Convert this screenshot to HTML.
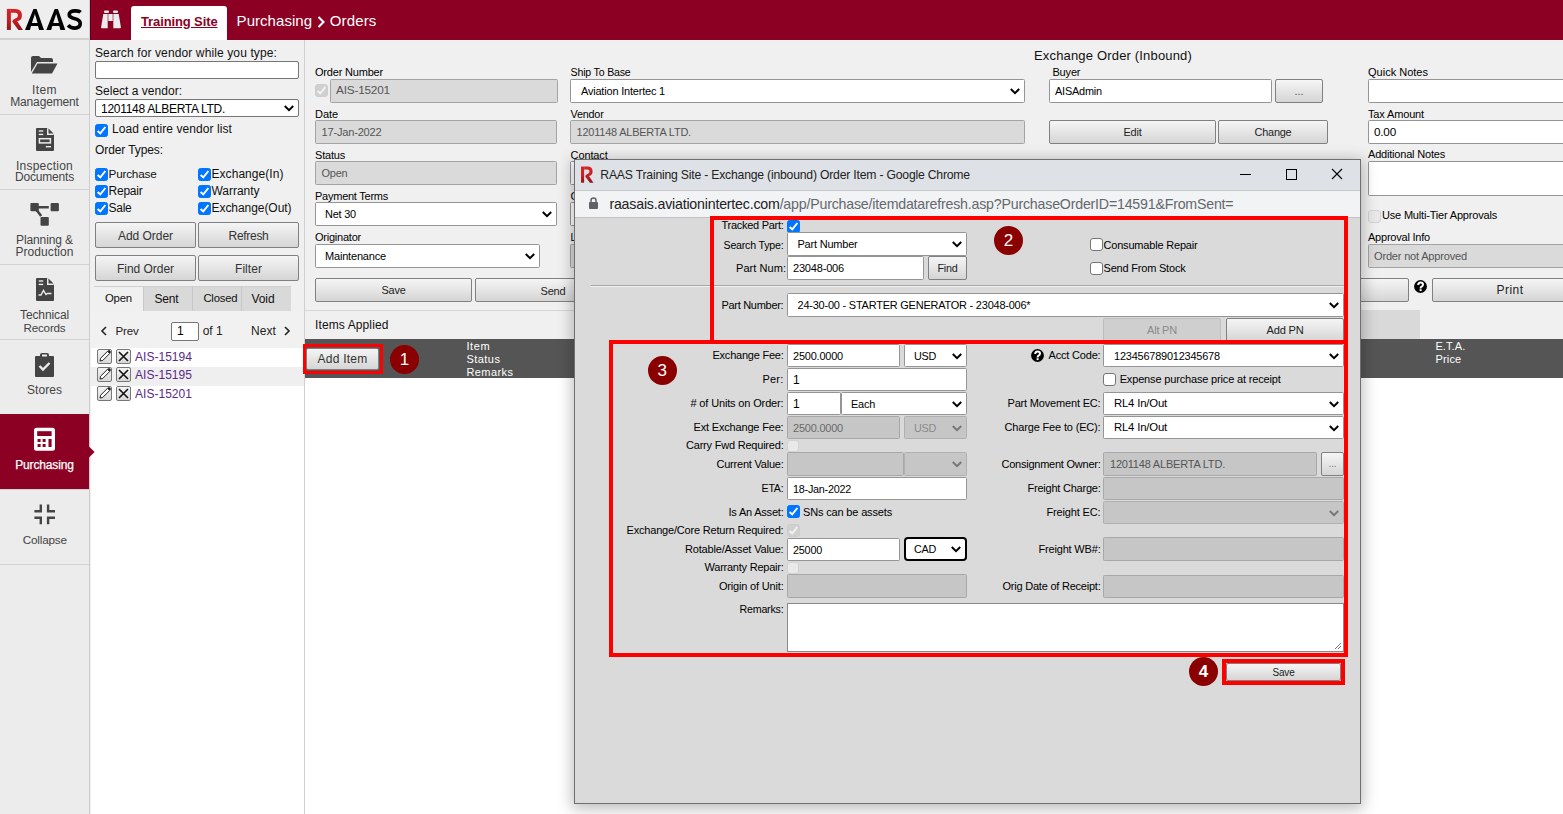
<!DOCTYPE html>
<html><head><meta charset="utf-8"><style>html,body{margin:0;padding:0;width:1563px;height:814px;overflow:hidden;background:#f0f0f0;font-family:"Liberation Sans",sans-serif;}
span{white-space:pre;}
</style></head>
<body>
<div style="position:absolute;left:0px;top:0px;width:90px;height:40px;box-sizing:border-box;background:#eeeeee;border-bottom:2px solid #d0d0d0;border-right:1px solid #d0d0d0;"></div>
<svg style="position:absolute;left:0;top:0" width="90" height="40" viewBox="0 0 90 40"><defs><linearGradient id="rg" x1="0" y1="0" x2="0" y2="1"><stop offset="0" stop-color="#d92327"/><stop offset="0.55" stop-color="#c51f24"/><stop offset="1" stop-color="#8a1719"/></linearGradient></defs><path d="M6.9,8.9 H10.9 V29.9 H6.9 Z" fill="url(#rg)"/><path d="M10.9,8.9 H15.5 Q21.9,8.9 21.9,15.4 Q21.9,20.3 17.2,21.2 L23,29.9 H18.4 L12.1,21.4 Q13.3,19.2 15.3,18.6 Q17.9,17.7 17.9,15.4 Q17.9,12.7 15.3,12.7 H10.9 Z" fill="url(#rg)"/><path fill-rule="evenodd" fill="#000" d="M25,29.9 L33.4,8.9 H36.6 L44,29.9 H39.1 L38,26 H31 L29.9,29.9 Z M31.9,23 L34.9,14 L37.6,23 Z"/><path fill-rule="evenodd" fill="#000" d="M46.3,29.9 L54.7,8.9 H57.9 L65.3,29.9 H60.4 L59.3,26 H52.3 L51.2,29.9 Z M53.2,23 L56.2,14 L58.9,23 Z"/><path d="M80.6,12.2 C78.9,10.5 77,10.8 74.8,10.8 C71.6,10.8 69.2,12.2 69.2,14.6 C69.2,17.4 72,18.2 75,18.8 C78.4,19.5 80.2,20.7 80.2,23.8 C80.2,26.9 77.6,28.1 74.6,28.1 C72,28.1 70,27.3 68.1,25.3" fill="none" stroke="#000" stroke-width="3.7"/></svg>
<div style="position:absolute;left:90px;top:0px;width:1473px;height:40px;box-sizing:border-box;background:#8c0023;"></div>
<div style="position:absolute;left:90px;top:0px;width:1px;height:40px;box-sizing:border-box;background:#5e0017;"></div>
<svg style="position:absolute;left:100px;top:10px" width="22" height="19" viewBox="0 0 22 19"><rect x="4" y="0.6" width="5" height="2.5" rx="1" fill="#ebebeb"/><rect x="13" y="0.6" width="5" height="2.5" rx="1" fill="#ebebeb"/><path d="M3.3 4 H7.7 V18.2 H2 Q1 18.2 1.1 17.2 Z" fill="#ebebeb"/><path d="M13.3 4 H18.7 L20.9 17.2 Q21 18.2 20 18.2 H13.3 Z" fill="#ebebeb"/><rect x="8.3" y="4" width="4.4" height="7" fill="#ebebeb"/></svg>
<div style="position:absolute;left:131px;top:6px;width:96px;height:34px;box-sizing:border-box;background:#fff;border-radius:3px 3px 0 0;"></div>
<span style="position:absolute;left:141.00px;top:15.20px;font-size:13px;line-height:13px;color:#8c0023;font-weight:700;letter-spacing:-0.117px;text-decoration:underline;">Training Site</span>
<span style="position:absolute;left:236.60px;top:13.30px;font-size:15px;line-height:15px;color:#fff;font-weight:400;letter-spacing:0.045px;">Purchasing</span>
<span style="position:absolute;left:329.80px;top:13.30px;font-size:15px;line-height:15px;color:#fff;font-weight:400;letter-spacing:0.126px;">Orders</span>
<svg style="position:absolute;left:317px;top:16px" width="9" height="12" viewBox="0 0 9 12"><path d="M1.5 1 L6.5 6 L1.5 11" fill="none" stroke="#fff" stroke-width="2.1"/></svg>
<div style="position:absolute;left:0px;top:40px;width:90px;height:774px;box-sizing:border-box;background:#ececec;border-right:1px solid #cdcdcd;"></div>
<div style="position:absolute;left:0px;top:114px;width:89px;height:1px;box-sizing:border-box;background:#d2d2d2;"></div>
<div style="position:absolute;left:0px;top:189px;width:89px;height:1px;box-sizing:border-box;background:#d2d2d2;"></div>
<div style="position:absolute;left:0px;top:264px;width:89px;height:1px;box-sizing:border-box;background:#d2d2d2;"></div>
<div style="position:absolute;left:0px;top:339px;width:89px;height:1px;box-sizing:border-box;background:#d2d2d2;"></div>
<div style="position:absolute;left:0px;top:414px;width:89px;height:1px;box-sizing:border-box;background:#d2d2d2;"></div>
<div style="position:absolute;left:0px;top:489px;width:89px;height:1px;box-sizing:border-box;background:#d2d2d2;"></div>
<div style="position:absolute;left:0px;top:564px;width:89px;height:1px;box-sizing:border-box;background:#d2d2d2;"></div>
<svg style="position:absolute;left:31px;top:56px" width="27" height="18" viewBox="0 0 27 18"><path d="M0 2 Q0 0 2 0 H8 L10 2 H20 Q22 2 22 4 V6 H6 L0 16 Z" fill="#444"/><path d="M6.5 7.5 H26.5 L21 17.5 H0.8 Z" fill="#444"/></svg>
<span style="position:absolute;left:32.00px;top:84.14px;font-size:12px;line-height:12px;color:#444;font-weight:400;letter-spacing:0.414px;">Item</span>
<span style="position:absolute;left:10.20px;top:96.44px;font-size:12px;line-height:12px;color:#444;font-weight:400;letter-spacing:-0.145px;">Management</span>
<svg style="position:absolute;left:36px;top:128px" width="18" height="23" viewBox="0 0 18 23"><path d="M0 1 Q0 0 1 0 H11 L18 7 V22 Q18 23 17 23 H1 Q0 23 0 22 Z" fill="#444"/><path d="M11 0 V7 H18" fill="#ececec"/><path d="M12.5 0.5 L17.5 5.5 H12.5 Z" fill="#444"/><rect x="2.7" y="2.3" width="4.5" height="1.4" fill="#ececec"/><rect x="2.7" y="5.7" width="4.5" height="1.4" fill="#ececec"/><rect x="3.4" y="10.7" width="11" height="4.2" fill="none" stroke="#ececec" stroke-width="1.5"/><rect x="9.8" y="18" width="5.2" height="1.4" fill="#ececec"/></svg>
<span style="position:absolute;left:16.00px;top:159.94px;font-size:12px;line-height:12px;color:#444;font-weight:400;letter-spacing:0.230px;">Inspection</span>
<span style="position:absolute;left:15.00px;top:171.44px;font-size:12px;line-height:12px;color:#444;font-weight:400;letter-spacing:-0.189px;">Documents</span>
<svg style="position:absolute;left:30px;top:203px" width="30" height="23" viewBox="0 0 30 23"><rect x="0.4" y="0.1" width="8.4" height="8.1" rx="1" fill="#444"/><rect x="20.6" y="0.1" width="8.3" height="8.1" rx="1" fill="#444"/><rect x="10.5" y="14.1" width="8.3" height="8.6" rx="1" fill="#444"/><rect x="8" y="3" width="10.8" height="2.5" fill="#444"/><path d="M6.6 7 L11.2 13" stroke="#444" stroke-width="2.6"/></svg>
<span style="position:absolute;left:16.00px;top:234.44px;font-size:12px;line-height:12px;color:#444;font-weight:400;letter-spacing:-0.105px;">Planning &amp;</span>
<span style="position:absolute;left:15.50px;top:246.44px;font-size:12px;line-height:12px;color:#444;font-weight:400;letter-spacing:0.062px;">Production</span>
<svg style="position:absolute;left:36px;top:278px" width="18" height="23" viewBox="0 0 18 23"><path d="M0 1 Q0 0 1 0 H11 L18 7 V22 Q18 23 17 23 H1 Q0 23 0 22 Z" fill="#444"/><path d="M11 0 V7 H18" fill="#ececec"/><path d="M12.5 0.5 L17.5 5.5 H12.5 Z" fill="#444"/><rect x="2.7" y="2.3" width="4.5" height="1.4" fill="#ececec"/><rect x="2.7" y="5.7" width="4.5" height="1.4" fill="#ececec"/><path d="M2.5 17 H5 L7.5 12.5 L10 16.5 L11.5 15.5 H15.5" fill="none" stroke="#ececec" stroke-width="1.4"/></svg>
<span style="position:absolute;left:20.00px;top:309.44px;font-size:12px;line-height:12px;color:#444;font-weight:400;letter-spacing:-0.115px;">Technical</span>
<span style="position:absolute;left:23.50px;top:321.74px;font-size:11.65px;line-height:11.65px;color:#444;font-weight:400;letter-spacing:-0.198px;">Records</span>
<svg style="position:absolute;left:35px;top:353px" width="19" height="24" viewBox="0 0 19 24"><path d="M0 4 Q0 3 1 3 H5 V2 Q5 0 7 0 H12 Q14 0 14 2 V3 H18 Q19 3 19 4 V23 Q19 24 18 24 H1 Q0 24 0 23 Z" fill="#444"/><rect x="7" y="1.5" width="5" height="2" fill="#ececec"/><path d="M4.5 13 L8 16.5 L14.5 10" fill="none" stroke="#ececec" stroke-width="2.4"/></svg>
<span style="position:absolute;left:27.00px;top:384.44px;font-size:12px;line-height:12px;color:#444;font-weight:400;letter-spacing:0.052px;">Stores</span>
<div style="position:absolute;left:0px;top:414px;width:89px;height:75px;box-sizing:border-box;background:#8c0023;"></div>
<svg style="position:absolute;left:89px;top:446px;z-index:5" width="6" height="12" viewBox="0 0 6 12"><path d="M0 0.4 L5.6 6 L0 11.6 Z" fill="#8c0023"/></svg>
<svg style="position:absolute;left:34px;top:427px" width="22" height="24" viewBox="0 0 22 24"><rect x="0" y="0.7" width="21" height="23" rx="2.5" fill="#fff"/><rect x="3.2" y="4.2" width="14.4" height="4.8" fill="#8c0023"/><rect x="3.6" y="12" width="3" height="3" fill="#8c0023"/><rect x="8.6" y="12" width="3" height="3" fill="#8c0023"/><rect x="3.6" y="17" width="3" height="3" fill="#8c0023"/><rect x="8.6" y="17" width="3" height="3" fill="#8c0023"/><rect x="14.5" y="12" width="3.1" height="8" fill="#8c0023"/></svg>
<span style="position:absolute;left:15.25px;top:459.14px;font-size:12px;line-height:12px;color:#fff;font-weight:400;letter-spacing:-0.155px;-webkit-text-stroke:0.25px #fff;">Purchasing</span>
<svg style="position:absolute;left:34px;top:504px" width="22" height="21" viewBox="0 0 22 21"><path d="M0.4 7.3 H6.8 V0.6 M21 7.3 H14.1 V0.6 M0.4 13.8 H6.8 V20.3 M21 13.8 H14.1 V20.3" fill="none" stroke="#444" stroke-width="2.4"/></svg>
<span style="position:absolute;left:22.75px;top:534.48px;font-size:11.72px;line-height:11.72px;color:#444;font-weight:400;letter-spacing:-0.202px;">Collapse</span>
<div style="position:absolute;left:90px;top:40px;width:215px;height:774px;box-sizing:border-box;background:#f0f0f0;border-right:1px solid #d0d0d0;"></div>
<span style="position:absolute;left:95.00px;top:47.44px;font-size:12px;line-height:12px;color:#111;font-weight:400;letter-spacing:0.118px;">Search for vendor while you type:</span>
<div style="position:absolute;left:95px;top:61px;width:204px;height:18px;box-sizing:border-box;background:#fff;border:1px solid #767676;border-radius:2px;"></div>
<span style="position:absolute;left:95.00px;top:85.44px;font-size:12px;line-height:12px;color:#111;font-weight:400;letter-spacing:0.018px;">Select a vendor:</span>
<div style="position:absolute;left:95px;top:99px;width:204px;height:18px;box-sizing:border-box;background:#fff;border:1px solid #767676;border-radius:2px;"><svg width="10" height="7" viewBox="0 0 10 7" style="position:absolute;right:4.5px;top:50%;margin-top:-3px"><path d="M0.8 1 L5 5.2 L9.2 1" fill="none" stroke="#000" stroke-width="2"/></svg></div>
<span style="position:absolute;left:101.00px;top:103.14px;font-size:12px;line-height:12px;color:#000;font-weight:400;letter-spacing:-0.294px;">1201148 ALBERTA LTD.</span>
<div style="position:absolute;left:95px;top:124px;width:13px;height:13px;box-sizing:border-box;background:#0075ff;border-radius:2.5px;border:1px solid #0075ff;"><svg width="13" height="13" viewBox="0 0 13 13" style="position:absolute;left:-1px;top:-1px"><path d="M2.6 6.9 L5.3 9.4 L10.4 3.0" fill="none" stroke="#fff" stroke-width="2"/></svg></div>
<span style="position:absolute;left:112.00px;top:123.44px;font-size:12px;line-height:12px;color:#111;font-weight:400;letter-spacing:0.084px;">Load entire vendor list</span>
<span style="position:absolute;left:95.00px;top:144.44px;font-size:12px;line-height:12px;color:#111;font-weight:400;letter-spacing:-0.095px;">Order Types:</span>
<div style="position:absolute;left:95px;top:168px;width:13px;height:13px;box-sizing:border-box;background:#0075ff;border-radius:2.5px;border:1px solid #0075ff;"><svg width="13" height="13" viewBox="0 0 13 13" style="position:absolute;left:-1px;top:-1px"><path d="M2.6 6.9 L5.3 9.4 L10.4 3.0" fill="none" stroke="#fff" stroke-width="2"/></svg></div>
<div style="position:absolute;left:198px;top:168px;width:13px;height:13px;box-sizing:border-box;background:#0075ff;border-radius:2.5px;border:1px solid #0075ff;"><svg width="13" height="13" viewBox="0 0 13 13" style="position:absolute;left:-1px;top:-1px"><path d="M2.6 6.9 L5.3 9.4 L10.4 3.0" fill="none" stroke="#fff" stroke-width="2"/></svg></div>
<span style="position:absolute;left:108.50px;top:167.86px;font-size:11.74px;line-height:11.74px;color:#111;font-weight:400;letter-spacing:-0.201px;">Purchase</span>
<span style="position:absolute;left:211.50px;top:167.64px;font-size:12px;line-height:12px;color:#111;font-weight:400;letter-spacing:0.052px;">Exchange(In)</span>
<div style="position:absolute;left:95px;top:185px;width:13px;height:13px;box-sizing:border-box;background:#0075ff;border-radius:2.5px;border:1px solid #0075ff;"><svg width="13" height="13" viewBox="0 0 13 13" style="position:absolute;left:-1px;top:-1px"><path d="M2.6 6.9 L5.3 9.4 L10.4 3.0" fill="none" stroke="#fff" stroke-width="2"/></svg></div>
<div style="position:absolute;left:198px;top:185px;width:13px;height:13px;box-sizing:border-box;background:#0075ff;border-radius:2.5px;border:1px solid #0075ff;"><svg width="13" height="13" viewBox="0 0 13 13" style="position:absolute;left:-1px;top:-1px"><path d="M2.6 6.9 L5.3 9.4 L10.4 3.0" fill="none" stroke="#fff" stroke-width="2"/></svg></div>
<span style="position:absolute;left:108.50px;top:184.64px;font-size:12px;line-height:12px;color:#111;font-weight:400;letter-spacing:-0.227px;">Repair</span>
<span style="position:absolute;left:211.50px;top:184.64px;font-size:12px;line-height:12px;color:#111;font-weight:400;letter-spacing:-0.029px;">Warranty</span>
<div style="position:absolute;left:95px;top:202px;width:13px;height:13px;box-sizing:border-box;background:#0075ff;border-radius:2.5px;border:1px solid #0075ff;"><svg width="13" height="13" viewBox="0 0 13 13" style="position:absolute;left:-1px;top:-1px"><path d="M2.6 6.9 L5.3 9.4 L10.4 3.0" fill="none" stroke="#fff" stroke-width="2"/></svg></div>
<div style="position:absolute;left:198px;top:202px;width:13px;height:13px;box-sizing:border-box;background:#0075ff;border-radius:2.5px;border:1px solid #0075ff;"><svg width="13" height="13" viewBox="0 0 13 13" style="position:absolute;left:-1px;top:-1px"><path d="M2.6 6.9 L5.3 9.4 L10.4 3.0" fill="none" stroke="#fff" stroke-width="2"/></svg></div>
<span style="position:absolute;left:108.50px;top:201.64px;font-size:12px;line-height:12px;color:#111;font-weight:400;letter-spacing:-0.258px;">Sale</span>
<span style="position:absolute;left:211.50px;top:201.64px;font-size:12px;line-height:12px;color:#111;font-weight:400;letter-spacing:-0.055px;">Exchange(Out)</span>
<div style="position:absolute;left:95px;top:222px;width:101px;height:26px;box-sizing:border-box;background:linear-gradient(#f5f5f5,#d5d5d5);border:1px solid #808080;border-radius:2px;"></div>
<span style="position:absolute;left:118.00px;top:230.16px;font-size:12px;line-height:12px;color:#333;font-weight:400;letter-spacing:-0.040px;">Add Order</span>
<div style="position:absolute;left:198px;top:222px;width:101px;height:26px;box-sizing:border-box;background:linear-gradient(#f5f5f5,#d5d5d5);border:1px solid #808080;border-radius:2px;"></div>
<span style="position:absolute;left:228.50px;top:230.16px;font-size:12px;line-height:12px;color:#333;font-weight:400;letter-spacing:-0.290px;">Refresh</span>
<div style="position:absolute;left:95px;top:255px;width:101px;height:26px;box-sizing:border-box;background:linear-gradient(#f5f5f5,#d5d5d5);border:1px solid #808080;border-radius:2px;"></div>
<span style="position:absolute;left:117.00px;top:263.16px;font-size:12px;line-height:12px;color:#333;font-weight:400;letter-spacing:-0.036px;">Find Order</span>
<div style="position:absolute;left:198px;top:255px;width:101px;height:26px;box-sizing:border-box;background:linear-gradient(#f5f5f5,#d5d5d5);border:1px solid #808080;border-radius:2px;"></div>
<span style="position:absolute;left:235.00px;top:263.16px;font-size:12px;line-height:12px;color:#333;font-weight:400;letter-spacing:0.055px;">Filter</span>
<div style="position:absolute;left:94px;top:286px;width:197px;height:25px;box-sizing:border-box;background:#d9d9d9;"></div>
<div style="position:absolute;left:94px;top:287px;width:49px;height:24px;box-sizing:border-box;background:#f0f0f0;"></div>
<div style="position:absolute;left:94px;top:286px;width:197px;height:1px;box-sizing:border-box;background:#cfcfcf;"></div>
<div style="position:absolute;left:192px;top:286px;width:1px;height:25px;box-sizing:border-box;background:#c8c8c8;"></div>
<div style="position:absolute;left:241px;top:286px;width:1px;height:25px;box-sizing:border-box;background:#c8c8c8;"></div>
<div style="position:absolute;left:143px;top:286px;width:1px;height:25px;box-sizing:border-box;background:#c8c8c8;"></div>
<span style="position:absolute;left:104.90px;top:293.18px;font-size:11.36px;line-height:11.36px;color:#111;font-weight:400;letter-spacing:-0.198px;">Open</span>
<span style="position:absolute;left:154.50px;top:292.64px;font-size:12px;line-height:12px;color:#111;font-weight:400;letter-spacing:-0.172px;">Sent</span>
<span style="position:absolute;left:203.40px;top:293.23px;font-size:11.31px;line-height:11.31px;color:#111;font-weight:400;letter-spacing:-0.202px;">Closed</span>
<span style="position:absolute;left:251.50px;top:292.64px;font-size:12px;line-height:12px;color:#111;font-weight:400;letter-spacing:-0.090px;">Void</span>
<div style="position:absolute;left:91px;top:311px;width:213px;height:38px;box-sizing:border-box;background:#f1f1f1;"></div>
<svg style="position:absolute;left:100px;top:326px" width="7" height="10" viewBox="0 0 7 10"><path d="M6 1 L2 5 L6 9" fill="none" stroke="#222" stroke-width="1.6"/></svg>
<span style="position:absolute;left:115.60px;top:325.81px;font-size:11.57px;line-height:11.57px;color:#222;font-weight:400;letter-spacing:-0.201px;">Prev</span>
<div style="position:absolute;left:171px;top:322px;width:28px;height:19px;box-sizing:border-box;background:#fff;border:1px solid #767676;border-radius:2px;"></div>
<span style="position:absolute;left:177.00px;top:325.44px;font-size:12px;line-height:12px;color:#000;font-weight:400;">1</span>
<span style="position:absolute;left:202.70px;top:325.44px;font-size:12px;line-height:12px;color:#222;font-weight:400;">of 1</span>
<span style="position:absolute;left:251.00px;top:325.44px;font-size:12px;line-height:12px;color:#222;font-weight:400;letter-spacing:0.078px;">Next</span>
<svg style="position:absolute;left:284px;top:326px" width="7" height="10" viewBox="0 0 7 10"><path d="M1 1 L5 5 L1 9" fill="none" stroke="#222" stroke-width="1.6"/></svg>
<div style="position:absolute;left:91px;top:348px;width:213px;height:19px;box-sizing:border-box;background:#fff;"></div>
<div style="position:absolute;left:91px;top:367px;width:213px;height:19px;box-sizing:border-box;background:#efefef;"></div>
<div style="position:absolute;left:91px;top:386px;width:213px;height:18px;box-sizing:border-box;background:#fff;"></div>
<div style="position:absolute;left:91px;top:404px;width:213px;height:410px;box-sizing:border-box;background:#fff;"></div>
<div style="position:absolute;left:97px;top:349px;width:15px;height:15px;box-sizing:border-box;background:linear-gradient(#f4f4f4,#d8d8d8);border:1px solid #777;border-radius:2px;"><svg width="15" height="15" viewBox="0 0 15 15" style="position:absolute;left:-1px;top:-1px"><path d="M3 12 L3.6 9.2 L10.5 2.3 L12.7 4.5 L5.8 11.4 Z" fill="#fff" stroke="#222" stroke-width="1"/><path d="M10.5 2.3 L12 0.8 L14.2 3 L12.7 4.5Z" fill="#222"/></svg></div>
<div style="position:absolute;left:116px;top:349px;width:15px;height:15px;box-sizing:border-box;background:linear-gradient(#f4f4f4,#d8d8d8);border:1px solid #777;border-radius:2px;"><svg width="15" height="15" viewBox="0 0 15 15" style="position:absolute;left:-1px;top:-1px"><path d="M3 3 L12 12 M12 3 L3 12" stroke="#111" stroke-width="1.6"/></svg></div>
<span style="position:absolute;left:135.00px;top:351.44px;font-size:12px;line-height:12px;color:#5b2a86;font-weight:400;letter-spacing:0.031px;">AIS-15194</span>
<div style="position:absolute;left:97px;top:367px;width:15px;height:15px;box-sizing:border-box;background:linear-gradient(#f4f4f4,#d8d8d8);border:1px solid #777;border-radius:2px;"><svg width="15" height="15" viewBox="0 0 15 15" style="position:absolute;left:-1px;top:-1px"><path d="M3 12 L3.6 9.2 L10.5 2.3 L12.7 4.5 L5.8 11.4 Z" fill="#fff" stroke="#222" stroke-width="1"/><path d="M10.5 2.3 L12 0.8 L14.2 3 L12.7 4.5Z" fill="#222"/></svg></div>
<div style="position:absolute;left:116px;top:367px;width:15px;height:15px;box-sizing:border-box;background:linear-gradient(#f4f4f4,#d8d8d8);border:1px solid #777;border-radius:2px;"><svg width="15" height="15" viewBox="0 0 15 15" style="position:absolute;left:-1px;top:-1px"><path d="M3 3 L12 12 M12 3 L3 12" stroke="#111" stroke-width="1.6"/></svg></div>
<span style="position:absolute;left:135.00px;top:369.44px;font-size:12px;line-height:12px;color:#5b2a86;font-weight:400;letter-spacing:0.031px;">AIS-15195</span>
<div style="position:absolute;left:97px;top:386px;width:15px;height:15px;box-sizing:border-box;background:linear-gradient(#f4f4f4,#d8d8d8);border:1px solid #777;border-radius:2px;"><svg width="15" height="15" viewBox="0 0 15 15" style="position:absolute;left:-1px;top:-1px"><path d="M3 12 L3.6 9.2 L10.5 2.3 L12.7 4.5 L5.8 11.4 Z" fill="#fff" stroke="#222" stroke-width="1"/><path d="M10.5 2.3 L12 0.8 L14.2 3 L12.7 4.5Z" fill="#222"/></svg></div>
<div style="position:absolute;left:116px;top:386px;width:15px;height:15px;box-sizing:border-box;background:linear-gradient(#f4f4f4,#d8d8d8);border:1px solid #777;border-radius:2px;"><svg width="15" height="15" viewBox="0 0 15 15" style="position:absolute;left:-1px;top:-1px"><path d="M3 3 L12 12 M12 3 L3 12" stroke="#111" stroke-width="1.6"/></svg></div>
<span style="position:absolute;left:135.00px;top:388.44px;font-size:12px;line-height:12px;color:#5b2a86;font-weight:400;letter-spacing:0.031px;">AIS-15201</span>
<span style="position:absolute;left:315.00px;top:67.09px;font-size:11px;line-height:11px;color:#000;font-weight:400;letter-spacing:-0.191px;">Order Number</span>
<div style="position:absolute;left:315px;top:84px;width:13px;height:13px;box-sizing:border-box;background:#d0d0d0;border-radius:3px;border:1px solid #cdcdcd;"><svg width="13" height="13" viewBox="0 0 13 13" style="position:absolute;left:-1px;top:-1px"><path d="M2.6 6.9 L5.3 9.4 L10.4 3.0" fill="none" stroke="#f2f2f2" stroke-width="2"/></svg></div>
<div style="position:absolute;left:330px;top:79px;width:228px;height:24px;box-sizing:border-box;background:#dadada;border:1px solid #a3a3a3;border-radius:1.5px;"></div>
<span style="position:absolute;left:336.00px;top:85.32px;font-size:11.81px;line-height:11.81px;color:#555;font-weight:400;letter-spacing:-0.202px;">AIS-15201</span>
<span style="position:absolute;left:315.00px;top:108.69px;font-size:11px;line-height:11px;color:#000;font-weight:400;letter-spacing:-0.062px;">Date</span>
<div style="position:absolute;left:315px;top:120px;width:242px;height:24px;box-sizing:border-box;background:#dadada;border:1px solid #a3a3a3;border-radius:1.5px;"></div>
<span style="position:absolute;left:321.50px;top:126.94px;font-size:11.08px;line-height:11.08px;color:#555;font-weight:400;letter-spacing:-0.202px;">17-Jan-2022</span>
<span style="position:absolute;left:315.00px;top:149.89px;font-size:11px;line-height:11px;color:#000;font-weight:400;letter-spacing:-0.198px;">Status</span>
<div style="position:absolute;left:315px;top:161px;width:242px;height:24px;box-sizing:border-box;background:#dadada;border:1px solid #a3a3a3;border-radius:1.5px;"></div>
<span style="position:absolute;left:321.50px;top:168.05px;font-size:10.95px;line-height:10.95px;color:#555;font-weight:400;letter-spacing:-0.198px;">Open</span>
<span style="position:absolute;left:315.00px;top:190.79px;font-size:11px;line-height:11px;color:#000;font-weight:400;letter-spacing:-0.248px;">Payment Terms</span>
<div style="position:absolute;left:315px;top:202px;width:242px;height:24px;box-sizing:border-box;background:#fff;border:1px solid #959595;border-radius:1.5px;"><svg width="10" height="7" viewBox="0 0 10 7" style="position:absolute;right:4.5px;top:50%;margin-top:-3px"><path d="M0.8 1 L5 5.2 L9.2 1" fill="none" stroke="#000" stroke-width="2"/></svg></div>
<span style="position:absolute;left:325.00px;top:209.07px;font-size:10.93px;line-height:10.93px;color:#000;font-weight:400;letter-spacing:-0.201px;">Net 30</span>
<span style="position:absolute;left:315.00px;top:231.89px;font-size:11px;line-height:11px;color:#000;font-weight:400;letter-spacing:-0.230px;">Originator</span>
<div style="position:absolute;left:315px;top:244px;width:225px;height:24px;box-sizing:border-box;background:#fff;border:1px solid #959595;border-radius:1.5px;"><svg width="10" height="7" viewBox="0 0 10 7" style="position:absolute;right:4.5px;top:50%;margin-top:-3px"><path d="M0.8 1 L5 5.2 L9.2 1" fill="none" stroke="#000" stroke-width="2"/></svg></div>
<span style="position:absolute;left:325.00px;top:250.97px;font-size:11.04px;line-height:11.04px;color:#000;font-weight:400;letter-spacing:-0.202px;">Maintenance</span>
<div style="position:absolute;left:315px;top:278px;width:157px;height:24px;box-sizing:border-box;background:linear-gradient(#f5f5f5,#d5d5d5);border:1px solid #808080;border-radius:2px;"></div>
<span style="position:absolute;left:381.50px;top:285.11px;font-size:10.88px;line-height:10.88px;color:#222;font-weight:400;letter-spacing:-0.201px;">Save</span>
<div style="position:absolute;left:475px;top:278px;width:225px;height:24px;box-sizing:border-box;background:linear-gradient(#f5f5f5,#d5d5d5);border:1px solid #808080;border-radius:2px;"></div>
<span style="position:absolute;left:540.50px;top:285.75px;font-size:11.04px;line-height:11.04px;color:#222;font-weight:400;letter-spacing:-0.197px;">Send</span>
<span style="position:absolute;left:570.60px;top:67.41px;font-size:10.62px;line-height:10.62px;color:#000;font-weight:400;letter-spacing:-0.199px;">Ship To Base</span>
<div style="position:absolute;left:570px;top:79px;width:455px;height:24px;box-sizing:border-box;background:#fff;border:1px solid #959595;border-radius:1.5px;"><svg width="10" height="7" viewBox="0 0 10 7" style="position:absolute;right:4.5px;top:50%;margin-top:-3px"><path d="M0.8 1 L5 5.2 L9.2 1" fill="none" stroke="#000" stroke-width="2"/></svg></div>
<span style="position:absolute;left:581.00px;top:86.02px;font-size:10.99px;line-height:10.99px;color:#000;font-weight:400;letter-spacing:-0.199px;">Aviation Intertec 1</span>
<span style="position:absolute;left:570.60px;top:108.87px;font-size:10.79px;line-height:10.79px;color:#000;font-weight:400;letter-spacing:-0.202px;">Vendor</span>
<div style="position:absolute;left:570px;top:120px;width:455px;height:24px;box-sizing:border-box;background:#dadada;border:1px solid #a3a3a3;border-radius:1.5px;"></div>
<span style="position:absolute;left:576.60px;top:127.05px;font-size:10.95px;line-height:10.95px;color:#555;font-weight:400;letter-spacing:-0.201px;">1201148 ALBERTA LTD.</span>
<span style="position:absolute;left:570.60px;top:149.89px;font-size:11px;line-height:11px;color:#000;font-weight:400;letter-spacing:-0.132px;">Contact</span>
<div style="position:absolute;left:570px;top:161px;width:455px;height:24px;box-sizing:border-box;background:#fff;border:1px solid #959595;border-radius:1.5px;"></div>
<span style="position:absolute;left:570.60px;top:190.79px;font-size:11px;line-height:11px;color:#000;font-weight:400;letter-spacing:-0.132px;">Contact</span>
<div style="position:absolute;left:570px;top:202px;width:455px;height:24px;box-sizing:border-box;background:#fff;border:1px solid #959595;border-radius:1.5px;"></div>
<span style="position:absolute;left:570.60px;top:232.56px;font-size:10.21px;line-height:10.21px;color:#000;font-weight:400;letter-spacing:-0.201px;">Location</span>
<div style="position:absolute;left:570px;top:244px;width:455px;height:24px;box-sizing:border-box;background:#dadada;border:1px solid #a3a3a3;border-radius:1.5px;"></div>
<span style="position:absolute;left:1034.00px;top:48.60px;font-size:13px;line-height:13px;color:#111;font-weight:400;letter-spacing:0.169px;">Exchange Order (Inbound)</span>
<span style="position:absolute;left:1052.40px;top:67.09px;font-size:11px;line-height:11px;color:#000;font-weight:400;letter-spacing:-0.150px;">Buyer</span>
<div style="position:absolute;left:1049px;top:79px;width:223px;height:24px;box-sizing:border-box;background:#fff;border:1px solid #959595;border-radius:1.5px;"></div>
<span style="position:absolute;left:1055.00px;top:86.07px;font-size:10.93px;line-height:10.93px;color:#000;font-weight:400;letter-spacing:-0.200px;">AISAdmin</span>
<div style="position:absolute;left:1275px;top:79px;width:48px;height:24px;box-sizing:border-box;background:linear-gradient(#f5f5f5,#d5d5d5);border:1px solid #808080;border-radius:2px;"></div>
<span style="position:absolute;left:1294.50px;top:85.65px;font-size:11px;line-height:11px;color:#555;font-weight:400;letter-spacing:-0.057px;">...</span>
<div style="position:absolute;left:1049px;top:120px;width:167px;height:24px;box-sizing:border-box;background:linear-gradient(#f5f5f5,#d5d5d5);border:1px solid #808080;border-radius:2px;"></div>
<span style="position:absolute;left:1123.50px;top:127.08px;font-size:10.91px;line-height:10.91px;color:#222;font-weight:400;letter-spacing:-0.202px;">Edit</span>
<div style="position:absolute;left:1218px;top:120px;width:110px;height:24px;box-sizing:border-box;background:linear-gradient(#f5f5f5,#d5d5d5);border:1px solid #808080;border-radius:2px;"></div>
<span style="position:absolute;left:1254.50px;top:127.09px;font-size:10.9px;line-height:10.9px;color:#222;font-weight:400;letter-spacing:-0.199px;">Change</span>
<span style="position:absolute;left:1368.00px;top:66.69px;font-size:11px;line-height:11px;color:#000;font-weight:400;letter-spacing:0.007px;">Quick Notes</span>
<div style="position:absolute;left:1368px;top:79px;width:232px;height:24px;box-sizing:border-box;background:#fff;border:1px solid #959595;border-radius:1.5px;"></div>
<span style="position:absolute;left:1368.00px;top:108.59px;font-size:11px;line-height:11px;color:#000;font-weight:400;letter-spacing:-0.148px;">Tax Amount</span>
<div style="position:absolute;left:1368px;top:120px;width:232px;height:24px;box-sizing:border-box;background:#fff;border:1px solid #959595;border-radius:1.5px;"></div>
<span style="position:absolute;left:1374.00px;top:126.41px;font-size:11.71px;line-height:11.71px;color:#000;font-weight:400;letter-spacing:-0.199px;">0.00</span>
<span style="position:absolute;left:1368.00px;top:149.29px;font-size:11px;line-height:11px;color:#000;font-weight:400;letter-spacing:-0.194px;">Additional Notes</span>
<div style="position:absolute;left:1368px;top:161px;width:232px;height:35px;box-sizing:border-box;background:#fff;border:1px solid #959595;border-radius:1.5px;"></div>
<div style="position:absolute;left:1368px;top:210px;width:13px;height:13px;box-sizing:border-box;background:#e9e9e9;border-radius:3px;border:1px solid #d3d3d3;"></div>
<span style="position:absolute;left:1382.00px;top:210.29px;font-size:11px;line-height:11px;color:#000;font-weight:400;letter-spacing:-0.184px;">Use Multi-Tier Approvals</span>
<span style="position:absolute;left:1368.00px;top:231.89px;font-size:11px;line-height:11px;color:#000;font-weight:400;letter-spacing:-0.218px;">Approval Info</span>
<div style="position:absolute;left:1368px;top:244px;width:232px;height:24px;box-sizing:border-box;background:#dadada;border:1px solid #a3a3a3;border-radius:1.5px;"></div>
<span style="position:absolute;left:1374.00px;top:250.95px;font-size:11.07px;line-height:11.07px;color:#555;font-weight:400;letter-spacing:-0.201px;">Order not Approved</span>
<div style="position:absolute;left:1250px;top:278px;width:159px;height:24px;box-sizing:border-box;background:linear-gradient(#f5f5f5,#d5d5d5);border:1px solid #808080;border-radius:2px;"></div>
<svg style="position:absolute;left:1414.3px;top:280.1px" width="13" height="13" viewBox="0 0 13 13"><circle cx="6.5" cy="6.5" r="6.4" fill="#000"/><path d="M4.2 5.1 Q4.2 2.5 6.6 2.5 Q9 2.5 9 4.6 Q9 6 7.6 6.7 Q6.6 7.2 6.6 8.4" fill="none" stroke="#fff" stroke-width="2"/><rect x="5.6" y="9.2" width="2" height="1.9" fill="#fff"/></svg>
<div style="position:absolute;left:1432px;top:278px;width:156px;height:24px;box-sizing:border-box;background:linear-gradient(#f5f5f5,#d5d5d5);border:1px solid #808080;border-radius:2px;"></div>
<span style="position:absolute;left:1496.50px;top:284.16px;font-size:12px;line-height:12px;color:#222;font-weight:400;letter-spacing:0.463px;">Print</span>
<span style="position:absolute;left:1509.00px;top:284.94px;font-size:12px;line-height:12px;color:#000;font-weight:400;"></span>
<div style="position:absolute;left:305px;top:310px;width:895px;height:1px;box-sizing:border-box;background:#d6d6d6;"></div>
<div style="position:absolute;left:1200px;top:310px;width:220px;height:29px;box-sizing:border-box;background:#d9d9d9;"></div>
<span style="position:absolute;left:315.00px;top:319.44px;font-size:12px;line-height:12px;color:#111;font-weight:400;letter-spacing:0.112px;">Items Applied</span>
<div style="position:absolute;left:305px;top:339px;width:1258px;height:39px;box-sizing:border-box;background:#555;"></div>
<div style="position:absolute;left:306px;top:348px;width:73px;height:22px;box-sizing:border-box;background:linear-gradient(#f5f5f5,#d5d5d5);border:1px solid #808080;border-radius:2px;"></div>
<span style="position:absolute;left:317.50px;top:353.16px;font-size:12px;line-height:12px;color:#333;font-weight:400;letter-spacing:0.246px;">Add Item</span>
<span style="position:absolute;left:466.40px;top:341.29px;font-size:11px;line-height:11px;color:#fff;font-weight:400;letter-spacing:0.648px;">Item</span>
<span style="position:absolute;left:466.40px;top:354.09px;font-size:11px;line-height:11px;color:#fff;font-weight:400;letter-spacing:0.469px;">Status</span>
<span style="position:absolute;left:466.40px;top:366.89px;font-size:11px;line-height:11px;color:#fff;font-weight:400;letter-spacing:0.426px;">Remarks</span>
<span style="position:absolute;left:1435.40px;top:341.09px;font-size:11px;line-height:11px;color:#fff;font-weight:400;letter-spacing:0.109px;">E.T.A.</span>
<span style="position:absolute;left:1435.40px;top:354.09px;font-size:11px;line-height:11px;color:#fff;font-weight:400;letter-spacing:0.188px;">Price</span>
<div style="position:absolute;left:305px;top:378px;width:1258px;height:436px;box-sizing:border-box;background:#fff;"></div>
<div style="position:absolute;left:303px;top:344px;width:80px;height:30px;box-sizing:border-box;border:3.5px solid #ff0000;"></div>
<div style="position:absolute;left:389.8px;top:344.6px;width:29.399999999999977px;height:29.399999999999977px;box-sizing:border-box;background:#8a0000;border-radius:50%;"></div>
<span style="position:absolute;left:399.77px;top:350.81px;font-size:17px;line-height:17px;color:#fff;font-weight:400;">1</span>
<div style="position:absolute;left:574px;top:159px;width:787px;height:645px;box-sizing:border-box;background:#dadada;border:1px solid #6f6f6f;box-shadow:0 3px 14px 2px rgba(0,0,0,0.26);"></div>
<div style="position:absolute;left:575px;top:160px;width:785px;height:30px;box-sizing:border-box;background:#dee1e6;"></div>
<div style="position:absolute;left:575px;top:190px;width:785px;height:1px;box-sizing:border-box;background:#c5c7cb;"></div>
<div style="position:absolute;left:575px;top:191px;width:785px;height:26px;box-sizing:border-box;background:#f2f3f5;"></div>
<div style="position:absolute;left:575px;top:217px;width:785px;height:1px;box-sizing:border-box;background:#c2c2c2;"></div>
<svg style="position:absolute;left:575px;top:160px" width="24" height="26" viewBox="0 0 24 26"><g transform="translate(0.72,-0.34) scale(0.77)"><path d="M6.9,8.9 H10.9 V29.9 H6.9 Z" fill="url(#rg)"/><path d="M10.9,8.9 H15.5 Q21.9,8.9 21.9,15.4 Q21.9,20.3 17.2,21.2 L23,29.9 H18.4 L12.1,21.4 Q13.3,19.2 15.3,18.6 Q17.9,17.7 17.9,15.4 Q17.9,12.7 15.3,12.7 H10.9 Z" fill="url(#rg)"/></g></svg>
<span style="position:absolute;left:600.30px;top:169.17px;font-size:12.2px;line-height:12.2px;color:#222;font-weight:400;letter-spacing:-0.199px;">RAAS Training Site - Exchange (inbound) Order Item - Google Chrome</span>
<div style="position:absolute;left:1240px;top:174px;width:11px;height:1px;box-sizing:border-box;background:#000;"></div>
<div style="position:absolute;left:1286px;top:169px;width:11px;height:11px;box-sizing:border-box;border:1px solid #000;"></div>
<svg style="position:absolute;left:1331px;top:168px" width="12" height="12" viewBox="0 0 12 12"><path d="M1 1 L11 11 M11 1 L1 11" stroke="#000" stroke-width="1.1"/></svg>
<svg style="position:absolute;left:589px;top:197px" width="9" height="12" viewBox="0 0 9 12"><path d="M2 5 V3.5 Q2 1 4.5 1 Q7 1 7 3.5 V5" fill="none" stroke="#5f6368" stroke-width="1.5"/><rect x="0" y="5" width="9" height="7" rx="1" fill="#5f6368"/></svg>
<span style="position:absolute;left:609.40px;top:197.18px;font-size:14.2px;line-height:14.2px;color:#202124;font-weight:400;letter-spacing:-0.201px;">raasais.aviationintertec.com<span style="color:#64686d">/app/Purchase/itemdatarefresh.asp?PurchaseOrderID=14591&amp;FromSent=</span></span>
<span style="position:absolute;left:721.50px;top:220.09px;font-size:11px;line-height:11px;color:#000;font-weight:400;letter-spacing:-0.279px;">Tracked Part:</span>
<div style="position:absolute;left:787px;top:220px;width:13px;height:13px;box-sizing:border-box;background:#0075ff;border-radius:2.5px;border:1px solid #0075ff;"><svg width="13" height="13" viewBox="0 0 13 13" style="position:absolute;left:-1px;top:-1px"><path d="M2.6 6.9 L5.3 9.4 L10.4 3.0" fill="none" stroke="#fff" stroke-width="2"/></svg></div>
<span style="position:absolute;left:723.50px;top:239.61px;font-size:10.62px;line-height:10.62px;color:#000;font-weight:400;letter-spacing:-0.199px;">Search Type:</span>
<div style="position:absolute;left:787px;top:232px;width:180px;height:24px;box-sizing:border-box;background:#fff;border:1px solid #959595;border-radius:1.5px;"><svg width="10" height="7" viewBox="0 0 10 7" style="position:absolute;right:4.5px;top:50%;margin-top:-3px"><path d="M0.8 1 L5 5.2 L9.2 1" fill="none" stroke="#000" stroke-width="2"/></svg></div>
<span style="position:absolute;left:797.50px;top:239.03px;font-size:10.97px;line-height:10.97px;color:#000;font-weight:400;letter-spacing:-0.199px;">Part Number</span>
<span style="position:absolute;left:736.00px;top:263.09px;font-size:11px;line-height:11px;color:#000;font-weight:400;letter-spacing:0.054px;">Part Num:</span>
<div style="position:absolute;left:787px;top:256px;width:137px;height:24px;box-sizing:border-box;background:#fff;border:1px solid #959595;border-radius:1.5px;"></div>
<span style="position:absolute;left:793.00px;top:262.97px;font-size:11.04px;line-height:11.04px;color:#000;font-weight:400;letter-spacing:-0.200px;">23048-006</span>
<div style="position:absolute;left:928px;top:256px;width:39px;height:24px;box-sizing:border-box;background:linear-gradient(#f5f5f5,#d5d5d5);border:1px solid #808080;border-radius:2px;"></div>
<span style="position:absolute;left:937.50px;top:263.18px;font-size:10.8px;line-height:10.8px;color:#222;font-weight:400;letter-spacing:-0.252px;">Find</span>
<div style="position:absolute;left:993.6999999999999px;top:225.8px;width:29.40000000000009px;height:29.399999999999977px;box-sizing:border-box;background:#8a0000;border-radius:50%;"></div>
<span style="position:absolute;left:1003.67px;top:232.01px;font-size:17px;line-height:17px;color:#fff;font-weight:400;">2</span>
<div style="position:absolute;left:1090px;top:238px;width:13px;height:13px;box-sizing:border-box;background:#fff;border-radius:3px;border:1px solid #767676;"></div>
<span style="position:absolute;left:1103.50px;top:239.59px;font-size:11px;line-height:11px;color:#000;font-weight:400;letter-spacing:-0.189px;">Consumable Repair</span>
<div style="position:absolute;left:1090px;top:262px;width:13px;height:13px;box-sizing:border-box;background:#fff;border-radius:3px;border:1px solid #767676;"></div>
<span style="position:absolute;left:1103.50px;top:263.39px;font-size:11px;line-height:11px;color:#000;font-weight:400;letter-spacing:-0.199px;">Send From Stock</span>
<div style="position:absolute;left:591px;top:285px;width:753px;height:1px;box-sizing:border-box;background:#a8a8a8;"></div>
<div style="position:absolute;left:591px;top:286px;width:753px;height:1px;box-sizing:border-box;background:#f0f0f0;"></div>
<span style="position:absolute;left:721.40px;top:299.99px;font-size:11px;line-height:11px;color:#000;font-weight:400;letter-spacing:-0.285px;">Part Number:</span>
<div style="position:absolute;left:787px;top:293px;width:557px;height:24px;box-sizing:border-box;background:#fff;border:1px solid #959595;border-radius:1.5px;"><svg width="10" height="7" viewBox="0 0 10 7" style="position:absolute;right:4.5px;top:50%;margin-top:-3px"><path d="M0.8 1 L5 5.2 L9.2 1" fill="none" stroke="#000" stroke-width="2"/></svg></div>
<span style="position:absolute;left:797.50px;top:300.06px;font-size:10.94px;line-height:10.94px;color:#000;font-weight:400;letter-spacing:-0.200px;">24-30-00 - STARTER GENERATOR - 23048-006*</span>
<div style="position:absolute;left:1103px;top:318px;width:118px;height:24px;box-sizing:border-box;background:#cfcfcf;border:1px solid #bdbdbd;border-radius:2px;"></div>
<span style="position:absolute;left:1147.00px;top:325.00px;font-size:11.01px;line-height:11.01px;color:#8a8a8a;font-weight:400;letter-spacing:-0.202px;">Alt PN</span>
<div style="position:absolute;left:1226px;top:318px;width:118px;height:24px;box-sizing:border-box;background:linear-gradient(#f5f5f5,#d5d5d5);border:1px solid #808080;border-radius:2px;"></div>
<span style="position:absolute;left:1266.50px;top:324.94px;font-size:11.08px;line-height:11.08px;color:#222;font-weight:400;letter-spacing:-0.198px;">Add PN</span>
<span style="position:absolute;left:712.50px;top:350.29px;font-size:11px;line-height:11px;color:#000;font-weight:400;letter-spacing:-0.231px;">Exchange Fee:</span>
<span style="position:absolute;left:762.50px;top:374.09px;font-size:11px;line-height:11px;color:#000;font-weight:400;letter-spacing:0.203px;">Per:</span>
<span style="position:absolute;left:690.50px;top:398.09px;font-size:11px;line-height:11px;color:#000;font-weight:400;letter-spacing:-0.150px;"># of Units on Order:</span>
<span style="position:absolute;left:693.50px;top:422.09px;font-size:11px;line-height:11px;color:#000;font-weight:400;letter-spacing:-0.174px;">Ext Exchange Fee:</span>
<span style="position:absolute;left:686.00px;top:439.99px;font-size:11px;line-height:11px;color:#000;font-weight:400;letter-spacing:-0.210px;">Carry Fwd Required:</span>
<span style="position:absolute;left:716.50px;top:458.99px;font-size:11px;line-height:11px;color:#000;font-weight:400;letter-spacing:-0.222px;">Current Value:</span>
<span style="position:absolute;left:761.50px;top:483.32px;font-size:10.61px;line-height:10.61px;color:#000;font-weight:400;letter-spacing:-0.201px;">ETA:</span>
<span style="position:absolute;left:728.50px;top:507.09px;font-size:11px;line-height:11px;color:#000;font-weight:400;letter-spacing:-0.207px;">Is An Asset:</span>
<span style="position:absolute;left:626.50px;top:524.89px;font-size:11px;line-height:11px;color:#000;font-weight:400;letter-spacing:-0.189px;">Exchange/Core Return Required:</span>
<span style="position:absolute;left:685.00px;top:543.79px;font-size:11px;line-height:11px;color:#000;font-weight:400;letter-spacing:-0.171px;">Rotable/Asset Value:</span>
<span style="position:absolute;left:704.50px;top:562.09px;font-size:11px;line-height:11px;color:#000;font-weight:400;letter-spacing:-0.233px;">Warranty Repair:</span>
<span style="position:absolute;left:719.00px;top:581.29px;font-size:11px;line-height:11px;color:#000;font-weight:400;letter-spacing:-0.183px;">Origin of Unit:</span>
<span style="position:absolute;left:739.50px;top:604.38px;font-size:10.66px;line-height:10.66px;color:#000;font-weight:400;letter-spacing:-0.201px;">Remarks:</span>
<div style="position:absolute;left:787px;top:344px;width:113px;height:23px;box-sizing:border-box;background:#fff;border:1px solid #959595;border-radius:1.5px;"></div>
<span style="position:absolute;left:793.00px;top:350.54px;font-size:10.96px;line-height:10.96px;color:#000;font-weight:400;letter-spacing:-0.202px;">2500.0000</span>
<div style="position:absolute;left:904px;top:344px;width:63px;height:23px;box-sizing:border-box;background:#fff;border:1px solid #959595;border-radius:1.5px;"><svg width="10" height="7" viewBox="0 0 10 7" style="position:absolute;right:4.5px;top:50%;margin-top:-3px"><path d="M0.8 1 L5 5.2 L9.2 1" fill="none" stroke="#000" stroke-width="2"/></svg></div>
<span style="position:absolute;left:914.00px;top:350.68px;font-size:10.8px;line-height:10.8px;color:#000;font-weight:400;letter-spacing:-0.270px;">USD</span>
<div style="position:absolute;left:787px;top:368px;width:180px;height:23px;box-sizing:border-box;background:#fff;border:1px solid #959595;border-radius:1.5px;"></div>
<span style="position:absolute;left:793.00px;top:373.66px;font-size:12px;line-height:12px;color:#000;font-weight:400;">1</span>
<div style="position:absolute;left:787px;top:392px;width:54px;height:23px;box-sizing:border-box;background:#fff;border:1px solid #959595;border-radius:1.5px;"></div>
<span style="position:absolute;left:793.00px;top:397.66px;font-size:12px;line-height:12px;color:#000;font-weight:400;">1</span>
<div style="position:absolute;left:841px;top:392px;width:126px;height:23px;box-sizing:border-box;background:#fff;border:1px solid #959595;border-radius:1.5px;"><svg width="10" height="7" viewBox="0 0 10 7" style="position:absolute;right:4.5px;top:50%;margin-top:-3px"><path d="M0.8 1 L5 5.2 L9.2 1" fill="none" stroke="#000" stroke-width="2"/></svg></div>
<span style="position:absolute;left:851.00px;top:398.61px;font-size:10.88px;line-height:10.88px;color:#000;font-weight:400;letter-spacing:-0.201px;">Each</span>
<div style="position:absolute;left:787px;top:416px;width:113px;height:23px;box-sizing:border-box;background:#c6c6c6;border:1px solid #a8a8a8;border-radius:1.5px;"></div>
<span style="position:absolute;left:793.00px;top:422.54px;font-size:10.96px;line-height:10.96px;color:#6a6a6a;font-weight:400;letter-spacing:-0.202px;">2500.0000</span>
<div style="position:absolute;left:904px;top:416px;width:63px;height:23px;box-sizing:border-box;background:#c6c6c6;border:1px solid #b0b0b0;border-radius:1.5px;"><svg width="10" height="7" viewBox="0 0 10 7" style="position:absolute;right:4.5px;top:50%;margin-top:-3px"><path d="M0.8 1 L5 5.2 L9.2 1" fill="none" stroke="#777" stroke-width="2"/></svg></div>
<span style="position:absolute;left:914.00px;top:422.68px;font-size:10.8px;line-height:10.8px;color:#8a8a8a;font-weight:400;letter-spacing:-0.270px;">USD</span>
<div style="position:absolute;left:787px;top:440px;width:12px;height:12px;box-sizing:border-box;background:#e9e9e9;border-radius:3px;border:1px solid #d3d3d3;"></div>
<div style="position:absolute;left:787px;top:452px;width:117px;height:24px;box-sizing:border-box;background:#c6c6c6;border:1px solid #a8a8a8;border-radius:1.5px;"></div>
<div style="position:absolute;left:904px;top:452px;width:63px;height:24px;box-sizing:border-box;background:#c6c6c6;border:1px solid #b0b0b0;border-radius:1.5px;"><svg width="10" height="7" viewBox="0 0 10 7" style="position:absolute;right:4.5px;top:50%;margin-top:-3px"><path d="M0.8 1 L5 5.2 L9.2 1" fill="none" stroke="#777" stroke-width="2"/></svg></div>
<div style="position:absolute;left:787px;top:477px;width:180px;height:23px;box-sizing:border-box;background:#fff;border:1px solid #959595;border-radius:1.5px;"></div>
<span style="position:absolute;left:793.00px;top:483.68px;font-size:10.8px;line-height:10.8px;color:#000;font-weight:400;letter-spacing:-0.241px;">18-Jan-2022</span>
<div style="position:absolute;left:787px;top:505px;width:13px;height:13px;box-sizing:border-box;background:#0075ff;border-radius:2.5px;border:1px solid #0075ff;"><svg width="13" height="13" viewBox="0 0 13 13" style="position:absolute;left:-1px;top:-1px"><path d="M2.6 6.9 L5.3 9.4 L10.4 3.0" fill="none" stroke="#fff" stroke-width="2"/></svg></div>
<span style="position:absolute;left:803.00px;top:507.29px;font-size:11px;line-height:11px;color:#000;font-weight:400;letter-spacing:-0.160px;">SNs can be assets</span>
<div style="position:absolute;left:787px;top:524px;width:13px;height:13px;box-sizing:border-box;background:#d0d0d0;border-radius:3px;border:1px solid #cdcdcd;"><svg width="13" height="13" viewBox="0 0 13 13" style="position:absolute;left:-1px;top:-1px"><path d="M2.6 6.9 L5.3 9.4 L10.4 3.0" fill="none" stroke="#f2f2f2" stroke-width="2"/></svg></div>
<div style="position:absolute;left:787px;top:538px;width:113px;height:23px;box-sizing:border-box;background:#fff;border:1px solid #959595;border-radius:1.5px;"></div>
<span style="position:absolute;left:793.00px;top:544.68px;font-size:10.8px;line-height:10.8px;color:#000;font-weight:400;letter-spacing:-0.208px;">25000</span>
<div style="position:absolute;left:904px;top:537px;width:63px;height:24px;box-sizing:border-box;background:#fff;border:2px solid #000;border-radius:4px;"><svg width="10" height="7" viewBox="0 0 10 7" style="position:absolute;right:4.5px;top:50%;margin-top:-3px"><path d="M0.8 1 L5 5.2 L9.2 1" fill="none" stroke="#000" stroke-width="2"/></svg></div>
<span style="position:absolute;left:914.00px;top:544.18px;font-size:10.8px;line-height:10.8px;color:#000;font-weight:400;letter-spacing:-0.270px;">CAD</span>
<div style="position:absolute;left:787px;top:562px;width:12px;height:12px;box-sizing:border-box;background:#e9e9e9;border-radius:3px;border:1px solid #d3d3d3;"></div>
<div style="position:absolute;left:787px;top:574px;width:180px;height:24px;box-sizing:border-box;background:#c6c6c6;border:1px solid #a8a8a8;border-radius:1.5px;"></div>
<div style="position:absolute;left:787px;top:603px;width:557px;height:49px;box-sizing:border-box;background:#fff;border:1px solid #8a8a8a;"><svg style="position:absolute;right:1px;bottom:1px" width="9" height="9" viewBox="0 0 9 9"><path d="M8 2 L2 8 M8 5 L5 8" stroke="#777" stroke-width="1"/></svg></div>
<span style="position:absolute;left:1048.50px;top:350.29px;font-size:11px;line-height:11px;color:#000;font-weight:400;letter-spacing:-0.181px;">Acct Code:</span>
<span style="position:absolute;left:1007.50px;top:397.79px;font-size:11px;line-height:11px;color:#000;font-weight:400;letter-spacing:-0.176px;">Part Movement EC:</span>
<span style="position:absolute;left:1004.50px;top:421.69px;font-size:11px;line-height:11px;color:#000;font-weight:400;letter-spacing:-0.160px;">Charge Fee to (EC):</span>
<span style="position:absolute;left:1001.50px;top:459.09px;font-size:11px;line-height:11px;color:#000;font-weight:400;letter-spacing:-0.240px;">Consignment Owner:</span>
<span style="position:absolute;left:1027.50px;top:483.29px;font-size:11px;line-height:11px;color:#000;font-weight:400;letter-spacing:-0.229px;">Freight Charge:</span>
<span style="position:absolute;left:1046.50px;top:507.09px;font-size:11px;line-height:11px;color:#000;font-weight:400;letter-spacing:-0.149px;">Freight EC:</span>
<span style="position:absolute;left:1038.50px;top:544.09px;font-size:11px;line-height:11px;color:#000;font-weight:400;letter-spacing:-0.182px;">Freight WB#:</span>
<span style="position:absolute;left:1002.50px;top:581.39px;font-size:11px;line-height:11px;color:#000;font-weight:400;letter-spacing:-0.225px;">Orig Date of Receipt:</span>
<svg style="position:absolute;left:1030.7px;top:349.1px" width="13" height="13" viewBox="0 0 13 13"><circle cx="6.5" cy="6.5" r="6.4" fill="#000"/><path d="M4.2 5.1 Q4.2 2.5 6.6 2.5 Q9 2.5 9 4.6 Q9 6 7.6 6.7 Q6.6 7.2 6.6 8.4" fill="none" stroke="#fff" stroke-width="2"/><rect x="5.6" y="9.2" width="2" height="1.9" fill="#fff"/></svg>
<div style="position:absolute;left:1103px;top:344px;width:241px;height:23px;box-sizing:border-box;background:#fff;border:1px solid #959595;border-radius:1.5px;"><svg width="10" height="7" viewBox="0 0 10 7" style="position:absolute;right:4.5px;top:50%;margin-top:-3px"><path d="M0.8 1 L5 5.2 L9.2 1" fill="none" stroke="#000" stroke-width="2"/></svg></div>
<span style="position:absolute;left:1114.00px;top:350.55px;font-size:10.95px;line-height:10.95px;color:#000;font-weight:400;letter-spacing:-0.202px;">123456789012345678</span>
<div style="position:absolute;left:1103px;top:373px;width:13px;height:13px;box-sizing:border-box;background:#fff;border-radius:3px;border:1px solid #767676;"></div>
<span style="position:absolute;left:1119.70px;top:373.89px;font-size:11px;line-height:11px;color:#000;font-weight:400;letter-spacing:-0.161px;">Expense purchase price at receipt</span>
<div style="position:absolute;left:1103px;top:392px;width:241px;height:23px;box-sizing:border-box;background:#fff;border:1px solid #959595;border-radius:1.5px;"><svg width="10" height="7" viewBox="0 0 10 7" style="position:absolute;right:4.5px;top:50%;margin-top:-3px"><path d="M0.8 1 L5 5.2 L9.2 1" fill="none" stroke="#000" stroke-width="2"/></svg></div>
<span style="position:absolute;left:1114.00px;top:398.20px;font-size:11.37px;line-height:11.37px;color:#000;font-weight:400;letter-spacing:-0.198px;">RL4 In/Out</span>
<div style="position:absolute;left:1103px;top:416px;width:241px;height:23px;box-sizing:border-box;background:#fff;border:1px solid #959595;border-radius:1.5px;"><svg width="10" height="7" viewBox="0 0 10 7" style="position:absolute;right:4.5px;top:50%;margin-top:-3px"><path d="M0.8 1 L5 5.2 L9.2 1" fill="none" stroke="#000" stroke-width="2"/></svg></div>
<span style="position:absolute;left:1114.00px;top:422.20px;font-size:11.37px;line-height:11.37px;color:#000;font-weight:400;letter-spacing:-0.198px;">RL4 In/Out</span>
<div style="position:absolute;left:1103px;top:452px;width:214px;height:24px;box-sizing:border-box;background:#c6c6c6;border:1px solid #a8a8a8;border-radius:1.5px;"></div>
<span style="position:absolute;left:1110.00px;top:459.01px;font-size:11.0px;line-height:11.0px;color:#555;font-weight:400;letter-spacing:-0.203px;">1201148 ALBERTA LTD.</span>
<div style="position:absolute;left:1321px;top:452px;width:23px;height:24px;box-sizing:border-box;background:linear-gradient(#f5f5f5,#d5d5d5);border:1px solid #808080;border-radius:2px;"></div>
<span style="position:absolute;left:1328.50px;top:459.14px;font-size:10px;line-height:10px;color:#777;font-weight:400;letter-spacing:-0.115px;">...</span>
<div style="position:absolute;left:1103px;top:477px;width:241px;height:23px;box-sizing:border-box;background:#c6c6c6;border:1px solid #a8a8a8;border-radius:1.5px;"></div>
<div style="position:absolute;left:1103px;top:501px;width:241px;height:23px;box-sizing:border-box;background:#c6c6c6;border:1px solid #b0b0b0;border-radius:1.5px;"><svg width="10" height="7" viewBox="0 0 10 7" style="position:absolute;right:4.5px;top:50%;margin-top:-3px"><path d="M0.8 1 L5 5.2 L9.2 1" fill="none" stroke="#777" stroke-width="2"/></svg></div>
<div style="position:absolute;left:1103px;top:537px;width:241px;height:24px;box-sizing:border-box;background:#c6c6c6;border:1px solid #a8a8a8;border-radius:1.5px;"></div>
<div style="position:absolute;left:1103px;top:575px;width:241px;height:23px;box-sizing:border-box;background:#c6c6c6;border:1px solid #a8a8a8;border-radius:1.5px;"></div>
<div style="position:absolute;left:710px;top:216px;width:638px;height:128px;box-sizing:border-box;border:4px solid #ff0000;"></div>
<div style="position:absolute;left:609px;top:340px;width:739px;height:317px;box-sizing:border-box;border:4px solid #ff0000;"></div>
<div style="position:absolute;left:647.5999999999999px;top:355.6px;width:29.40000000000009px;height:29.399999999999977px;box-sizing:border-box;background:#8a0000;border-radius:50%;"></div>
<span style="position:absolute;left:657.57px;top:361.81px;font-size:17px;line-height:17px;color:#fff;font-weight:400;">3</span>
<div style="position:absolute;left:1226px;top:663px;width:115px;height:18px;box-sizing:border-box;background:linear-gradient(#f5f5f5,#d5d5d5);border:1px solid #808080;border-radius:2px;"></div>
<span style="position:absolute;left:1272.50px;top:667.50px;font-size:10.0px;line-height:10.0px;color:#222;font-weight:400;letter-spacing:-0.200px;">Save</span>
<div style="position:absolute;left:1222px;top:659px;width:123px;height:26px;box-sizing:border-box;border:4px solid #ff0000;"></div>
<div style="position:absolute;left:1188.7px;top:656.8px;width:29.40000000000009px;height:29.40000000000009px;box-sizing:border-box;background:#8a0000;border-radius:50%;"></div>
<span style="position:absolute;left:1198.67px;top:663.01px;font-size:17px;line-height:17px;color:#fff;font-weight:700;">4</span>
</body></html>
